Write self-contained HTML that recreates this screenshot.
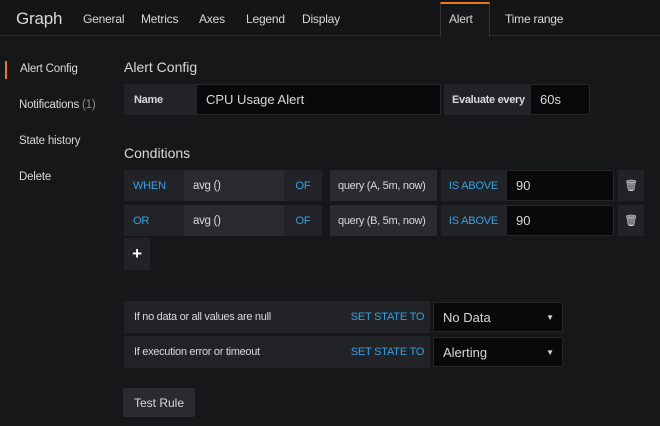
<!DOCTYPE html><html><head><style>
*{box-sizing:border-box;margin:0;padding:0}
body{width:660px;height:426px;background:#161719;font-family:"Liberation Sans",sans-serif;color:#d8d9da;position:relative;overflow:hidden;font-size:12px}
.a{position:absolute;display:flex;align-items:center;white-space:nowrap}
.hd{position:absolute;left:0;top:0;width:660px;height:36px;background:#141517;border-bottom:1px solid #2a2b2e}
.lb{background:#222327;color:#d8d9da;padding-left:10px;font-weight:bold;font-size:11px;letter-spacing:-0.3px}
.sg{background:#2a2b2f;padding-left:9px;font-size:11.5px;letter-spacing:-0.3px}
.in{background:#09090b;border:1px solid #262628;padding-left:9px;font-size:13px}
.bl{color:#33a2e5;justify-content:center;background:#222327;font-size:11px;letter-spacing:-0.2px}
.tab{position:absolute;top:12px;font-size:12px;color:#d8d9da;white-space:nowrap;letter-spacing:-0.2px}
.side{position:absolute;left:19px;font-size:11.5px;color:#d8d9da;white-space:nowrap;letter-spacing:-0.2px}
</style></head><body>
<div class="hd"></div>
<div class="tab" style="left:16px;top:9px;font-size:17px">Graph</div>
<div class="tab" style="left:83px">General</div>
<div class="tab" style="left:141px">Metrics</div>
<div class="tab" style="left:199px">Axes</div>
<div class="tab" style="left:246px">Legend</div>
<div class="tab" style="left:302px">Display</div>
<div style="position:absolute;left:440px;top:2px;width:50px;height:35px;background:#161719;border:1px solid #333;border-bottom:none;border-top:2px solid #eb7b18"></div>
<div class="tab" style="left:449px">Alert</div>
<div class="tab" style="left:505px">Time range</div>
<div style="position:absolute;left:5px;top:61px;width:2px;height:18px;background:#eb7b18"></div>
<div class="side" style="left:20px;top:63px">Alert Config</div>
<div class="side" style="top:99px">Notifications <span style="color:#8e8e8e">(1)</span></div>
<div class="side" style="top:135px">State history</div>
<div class="side" style="top:171px">Delete</div>
<div class="a" style="left:124px;top:59px;font-size:14px">Alert Config</div>
<div class="a lb" style="left:124px;top:84px;width:72px;height:31px">Name</div>
<div class="a in" style="left:196px;top:84px;width:245px;height:31px">CPU Usage Alert</div>
<div class="a lb" style="left:444px;top:84px;width:86px;height:31px;padding-left:8px">Evaluate every</div>
<div class="a in" style="left:530px;top:84px;width:60px;height:31px">60s</div>
<div class="a" style="left:124px;top:145px;font-size:14px">Conditions</div>

<div class="a bl" style="left:124px;top:170px;width:60px;height:31px;justify-content:flex-start;padding-left:9px">WHEN</div>
<div class="a sg" style="left:184px;top:170px;width:100px;height:31px">avg ()</div>
<div class="a bl" style="left:284px;top:170px;width:38px;height:31px">OF</div>
<div class="a sg" style="left:330px;top:170px;width:107px;height:31px;padding-left:8px;font-size:11px">query (A, 5m, now)</div>
<div class="a bl" style="left:441px;top:170px;width:65px;height:31px">IS ABOVE</div>
<div class="a in" style="left:506px;top:170px;width:108px;height:31px">90</div>
<div class="a bl" style="left:618px;top:170px;width:26px;height:31px;color:#d8d9da">🗑</div>

<div class="a bl" style="left:124px;top:205px;width:60px;height:31px;justify-content:flex-start;padding-left:9px">OR</div>
<div class="a sg" style="left:184px;top:205px;width:100px;height:31px">avg ()</div>
<div class="a bl" style="left:284px;top:205px;width:38px;height:31px">OF</div>
<div class="a sg" style="left:330px;top:205px;width:107px;height:31px;padding-left:8px;font-size:11px">query (B, 5m, now)</div>
<div class="a bl" style="left:441px;top:205px;width:65px;height:31px">IS ABOVE</div>
<div class="a in" style="left:506px;top:205px;width:108px;height:31px">90</div>
<div class="a bl" style="left:618px;top:205px;width:26px;height:31px;color:#d8d9da">🗑</div>

<div class="a bl" style="left:124px;top:238px;width:26px;height:32px;color:#fff;font-size:17px;font-weight:bold">+</div>

<div class="a lb" style="left:124px;top:301px;width:221px;height:32px;font-weight:normal;font-size:11px">If no data or all values are null</div>
<div class="a bl" style="left:345px;top:301px;width:85px;height:32px">SET STATE TO</div>
<div class="a in" style="left:433px;top:302px;width:130px;height:30px">No Data<span style="position:absolute;right:8px;font-size:8px">▼</span></div>
<div class="a lb" style="left:124px;top:336px;width:221px;height:32px;font-weight:normal;font-size:11px">If execution error or timeout</div>
<div class="a bl" style="left:345px;top:336px;width:85px;height:32px">SET STATE TO</div>
<div class="a in" style="left:433px;top:337px;width:130px;height:30px">Alerting<span style="position:absolute;right:8px;font-size:8px">▼</span></div>

<div class="a" style="left:123px;top:388px;width:72px;height:29px;background:#2a2b2f;justify-content:center;font-size:12px;border-radius:2px">Test Rule</div>
</body></html>
